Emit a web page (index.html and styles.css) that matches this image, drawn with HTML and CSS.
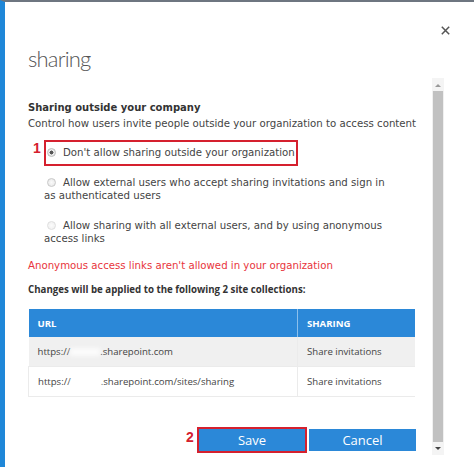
FILE: index.html
```html
<!DOCTYPE html>
<html>
<head>
<meta charset="utf-8">
<link rel="stylesheet" href="styles.css">
</head>
<body>
<div class="dialog">
  <div class="top">
    <svg class="close" width="9" height="9" viewBox="0 0 9 9"><path d="M0.8 0.8 L8.2 8.2 M8.2 0.8 L0.8 8.2" stroke="#555" stroke-width="1.5" fill="none"/></svg>
  </div>
  <h1 class="title">sharing</h1>
  <div class="panel">
    <div class="content">
      <div class="heading">Sharing outside your company</div>
      <div class="desc">Control how users invite people outside your organization to access content</div>
      <div class="options">
        <div class="option first">
          <span class="num num1">1</span>
          <span class="mark mark1"></span>
          <span class="radio checked"></span>Don't allow sharing outside your organization
        </div>
        <div class="option">
          <span class="radio"></span>Allow external users who accept sharing invitations and sign in as authenticated users
        </div>
        <div class="option">
          <span class="radio disabled"></span>Allow sharing with all external users, and by using anonymous access links
        </div>
      </div>
      <div class="warn">Anonymous access links aren't allowed in your organization</div>
      <div class="changes">Changes will be applied to the following 2 site collections:</div>
      <table class="sites">
        <thead>
          <tr><th class="c-url">URL</th><th class="c-share">SHARING</th></tr>
        </thead>
        <tbody>
          <tr class="alt"><td>https://<span class="blur"></span>.sharepoint.com</td><td>Share invitations</td></tr>
          <tr><td>https://<span class="blur"></span>.sharepoint.com/sites/sharing</td><td>Share invitations</td></tr>
        </tbody>
      </table>
      <div class="buttons">
        <span class="num num2">2</span>
        <button class="btn save">Save</button>
        <button class="btn cancel">Cancel</button>
      </div>
    </div>
    <div class="scrollbar">
      <div class="sb-btn"><svg width="6" height="4" viewBox="0 0 6 4"><path d="M0 4 L3 1 L6 4 Z" fill="#999"/></svg></div>
      <div class="sb-thumb"></div>
      <div class="sb-btn"><svg width="6" height="4" viewBox="0 0 6 4"><path d="M0 0 L6 0 L3 3 Z" fill="#444"/></svg></div>
    </div>
  </div>
</div>
</body>
</html>
```
FILE: styles.css
```css
html, body {
  margin: 0;
  padding: 0;
  background: #fff;
}
body {
  width: 474px;
  height: 467px;
  overflow: hidden;
}
.dialog {
  box-sizing: border-box;
  height: 467px;
  border-top: 2px solid #6e7680;
  border-left: 5px solid #1f87d8;
  background: #fff;
  position: relative;
}
.top {
  height: 33px;
  display: flex;
  justify-content: flex-end;
  align-items: flex-end;
  padding-right: 24px;
}
.close {
  display: block;
}
.title {
  margin: 0;
  padding-left: 23px;
  font-family: "Lato", sans-serif;
  font-weight: 300;
  font-size: 22px;
  letter-spacing: -0.8px;
  line-height: 30px;
  height: 30px;
  margin-top: 9px;
  color: #555;
}
.panel {
  display: flex;
  margin-top: 4px;
  padding-left: 23px;
}
.content {
  width: 388px;
  padding-top: 23px;
  font-family: "DejaVu Sans", Verdana, sans-serif;
  font-size: 10.2px;
  color: #444;
}
.heading {
  font-weight: bold;
  font-size: 10px;
  line-height: 14px;
  color: #333;
}
.desc {
  line-height: 14px;
  margin-top: 2px;
  white-space: nowrap;
}
.options {
  margin-top: 15px;
  padding-left: 16px;
}
.option {
  position: relative;
  line-height: 13px;
  margin-bottom: 17px;
  padding-right: 22px;
}
.radio {
  display: inline-block;
  box-sizing: border-box;
  width: 9px;
  height: 9px;
  border-radius: 50%;
  border: 1px solid #c8c8c8;
  background: radial-gradient(circle, #fafafa 0, #e4e4e4 100%);
  margin: 0 7px 0 3px;
  vertical-align: -1px;
}
.radio.checked {
  background: radial-gradient(circle, #555 0, #555 1.8px, #eee 2.2px, #e0e0e0 100%);
  border-color: #bdbdbd;
}
.radio.disabled {
  opacity: 0.6;
}
.mark {
  position: absolute;
  border: 2px solid #d5202e;
  box-sizing: border-box;
}
.mark1 {
  left: 0;
  top: -6px;
  width: 254px;
  height: 26px;
}
.num {
  position: absolute;
  color: #d5202e;
  font-family: "Liberation Sans", Arial, sans-serif;
  font-weight: bold;
  font-size: 14px;
  line-height: 14px;
}
.num1 {
  left: -11px;
  top: -5px;
}
.warn {
  color: #e8343b;
  line-height: 14px;
  margin-top: -3px;
}
.changes {
  font-family: "Open Sans", sans-serif;
  font-weight: bold;
  font-size: 9.7px;
  line-height: 14px;
  color: #333;
  margin-top: 10px;
}
.sites {
  margin-top: 12px;
  width: 387px;
  border-collapse: collapse;
  font-family: "Open Sans", sans-serif;
  font-size: 9.6px;
}
.sites th {
  background: #2b88d8;
  color: #fff;
  text-align: left;
  font-weight: bold;
  height: 28px;
  padding: 0 9px;
  box-sizing: border-box;
}
.sites th.c-url {
  width: 269px;
  border-right: 1px solid #8cc0ec;
}
.sites td {
  height: 29px;
  padding: 0 9px;
  color: #444;
  border-bottom: 1px solid #ebebeb;
}
.sites td + td {
  border-left: 1px solid #ebebeb;
}
.sites tr.alt td {
  background: #f0f0f0;
}
.sites tbody tr:last-child td:first-child {
  border-left: 1px solid #ebebeb;
}
.blur {
  display: inline-block;
  width: 30px;
  height: 8px;
  background: rgba(255,255,255,0.75);
  filter: blur(2px);
  vertical-align: middle;
}
.buttons {
  position: relative;
  display: flex;
  justify-content: flex-end;
  gap: 4px;
  margin-top: 32px;
}
.btn {
  font-family: "Open Sans", sans-serif;
  font-size: 13px;
  color: #fff;
  background: #2b88d8;
  border: none;
  height: 22px;
  width: 107px;
  padding: 0;
}
.btn.save {
  width: 106px;
  outline: 2px solid #d5202e;
}
.num2 {
  left: 158px;
  top: 1px;
}
.scrollbar {
  margin-left: 16px;
  width: 12px;
  height: 377px;
  display: flex;
  flex-direction: column;
  background: #f0f0f0;
}
.sb-btn {
  height: 13px;
  display: flex;
  align-items: center;
  justify-content: center;
  background: #f4f4f4;
}
.sb-thumb {
  flex: 1;
  background: #c1c1c1;
  margin: 0 1px;
}
```
